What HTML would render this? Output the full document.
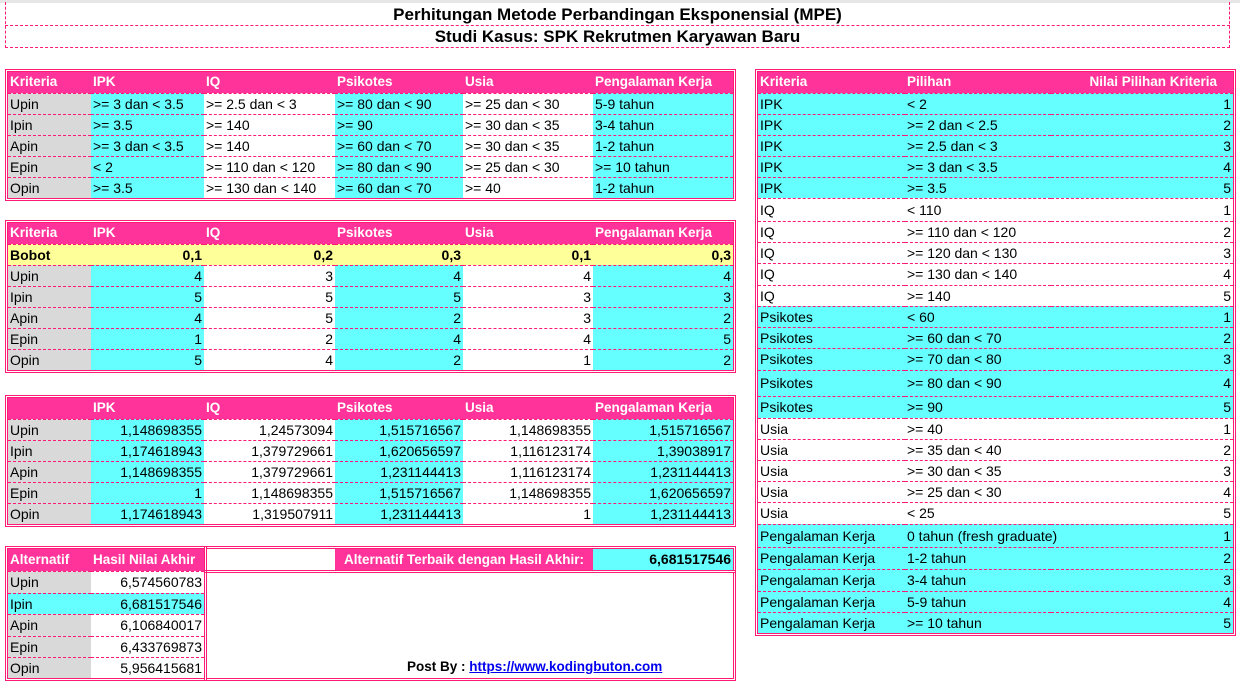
<!DOCTYPE html>
<html><head><meta charset="utf-8"><style>
*{margin:0;padding:0;box-sizing:border-box}
body{width:1240px;height:694px;background:#fff;position:relative;overflow:hidden;font-family:"Liberation Sans",sans-serif;font-size:14px;color:#000}
.box{position:absolute;border:3px double #ff1a75}
table{border-collapse:collapse;table-layout:fixed}
td{height:21px;padding:0 2px;white-space:nowrap;overflow:visible;border-bottom:1px dashed #ff1a75;line-height:20px}
tr.h td{background:#ff3399;color:#fff;font-weight:bold;font-size:13.5px}
tr:last-child td{border-bottom:none}
.g{background:#d9d9d9}.c{background:#66ffff}.w{background:#fff}.y{background:#ffff99;font-weight:bold}
.r{text-align:right}
.title{position:absolute;left:5px;width:1225px;text-align:center;font-weight:bold;font-size:17px;border-bottom:1px dashed #ff1a75}
</style></head><body>
<div style="position:absolute;left:0;top:0;width:1240px;height:3px;background:#e6e6e6"></div>
<div style="position:absolute;left:5px;top:2px;width:1px;height:46px;border-left:1px dashed #ff1a75"></div>
<div style="position:absolute;left:1229px;top:2px;width:1px;height:46px;border-left:1px dashed #ff1a75"></div>
<div class="title" style="top:3px;height:23px;line-height:23px">Perhitungan Metode Perbandingan Eksponensial (MPE)</div>
<div class="title" style="top:26px;height:22px;line-height:22px">Studi Kasus: SPK Rekrutmen Karyawan Baru</div>

<div class="box" style="left:5px;top:69px;width:731px">
<table style="width:725px"><colgroup><col style="width:83px"><col style="width:113px"><col style="width:131px"><col style="width:128px"><col style="width:130px"><col style="width:140px"></colgroup>
<tr class="h"><td>Kriteria</td><td>IPK</td><td>IQ</td><td>Psikotes</td><td>Usia</td><td>Pengalaman Kerja</td></tr>
<tr><td class="g">Upin</td><td class="c">&gt;= 3 dan &lt; 3.5</td><td class="w">&gt;= 2.5 dan &lt; 3</td><td class="c">&gt;= 80 dan &lt; 90</td><td class="w">&gt;= 25 dan &lt; 30</td><td class="c">5-9 tahun</td></tr>
<tr><td class="g">Ipin</td><td class="c">&gt;= 3.5</td><td class="w">&gt;= 140</td><td class="c">&gt;= 90</td><td class="w">&gt;= 30 dan &lt; 35</td><td class="c">3-4 tahun</td></tr>
<tr><td class="g">Apin</td><td class="c">&gt;= 3 dan &lt; 3.5</td><td class="w">&gt;= 140</td><td class="c">&gt;= 60 dan &lt; 70</td><td class="w">&gt;= 30 dan &lt; 35</td><td class="c">1-2 tahun</td></tr>
<tr><td class="g">Epin</td><td class="c">&lt; 2</td><td class="w">&gt;= 110 dan &lt; 120</td><td class="c">&gt;= 80 dan &lt; 90</td><td class="w">&gt;= 25 dan &lt; 30</td><td class="c">&gt;= 10 tahun</td></tr>
<tr><td class="g">Opin</td><td class="c">&gt;= 3.5</td><td class="w">&gt;= 130 dan &lt; 140</td><td class="c">&gt;= 60 dan &lt; 70</td><td class="w">&gt;= 40</td><td class="c">1-2 tahun</td></tr>
</table></div>

<div class="box" style="left:5px;top:220px;width:731px">
<table style="width:725px"><colgroup><col style="width:83px"><col style="width:113px"><col style="width:131px"><col style="width:128px"><col style="width:130px"><col style="width:140px"></colgroup>
<tr class="h"><td>Kriteria</td><td>IPK</td><td>IQ</td><td>Psikotes</td><td>Usia</td><td>Pengalaman Kerja</td></tr>
<tr class="y"><td>Bobot</td><td class="r">0,1</td><td class="r">0,2</td><td class="r">0,3</td><td class="r">0,1</td><td class="r">0,3</td></tr>
<tr><td class="g">Upin</td><td class="c r">4</td><td class="w r">3</td><td class="c r">4</td><td class="w r">4</td><td class="c r">4</td></tr>
<tr><td class="g">Ipin</td><td class="c r">5</td><td class="w r">5</td><td class="c r">5</td><td class="w r">3</td><td class="c r">3</td></tr>
<tr><td class="g">Apin</td><td class="c r">4</td><td class="w r">5</td><td class="c r">2</td><td class="w r">3</td><td class="c r">2</td></tr>
<tr><td class="g">Epin</td><td class="c r">1</td><td class="w r">2</td><td class="c r">4</td><td class="w r">4</td><td class="c r">5</td></tr>
<tr><td class="g">Opin</td><td class="c r">5</td><td class="w r">4</td><td class="c r">2</td><td class="w r">1</td><td class="c r">2</td></tr>
</table></div>

<div class="box" style="left:5px;top:395px;width:731px">
<table style="width:725px"><colgroup><col style="width:83px"><col style="width:113px"><col style="width:131px"><col style="width:128px"><col style="width:130px"><col style="width:140px"></colgroup>
<tr class="h"><td></td><td>IPK</td><td>IQ</td><td>Psikotes</td><td>Usia</td><td>Pengalaman Kerja</td></tr>
<tr><td class="g">Upin</td><td class="c r">1,148698355</td><td class="w r">1,24573094</td><td class="c r">1,515716567</td><td class="w r">1,148698355</td><td class="c r">1,515716567</td></tr>
<tr><td class="g">Ipin</td><td class="c r">1,174618943</td><td class="w r">1,379729661</td><td class="c r">1,620656597</td><td class="w r">1,116123174</td><td class="c r">1,39038917</td></tr>
<tr><td class="g">Apin</td><td class="c r">1,148698355</td><td class="w r">1,379729661</td><td class="c r">1,231144413</td><td class="w r">1,116123174</td><td class="c r">1,231144413</td></tr>
<tr><td class="g">Epin</td><td class="c r">1</td><td class="w r">1,148698355</td><td class="c r">1,515716567</td><td class="w r">1,148698355</td><td class="c r">1,620656597</td></tr>
<tr><td class="g">Opin</td><td class="c r">1,174618943</td><td class="w r">1,319507911</td><td class="c r">1,231144413</td><td class="w r">1</td><td class="c r">1,231144413</td></tr>
</table></div>

<div class="box" style="left:5px;top:546px;width:202px">
<table style="width:196px"><colgroup><col style="width:83px"><col style="width:113px"></colgroup>
<tr class="h"><td style="height:22px">Alternatif</td><td>Hasil Nilai Akhir</td></tr>
<tr><td class="g" style="height:22px">Upin</td><td class="w r">6,574560783</td></tr>
<tr><td class="c" style="height:21px">Ipin</td><td class="c r">6,681517546</td></tr>
<tr><td class="g" style="height:22px">Apin</td><td class="w r">6,106840017</td></tr>
<tr><td class="g" style="height:21px">Epin</td><td class="w r">6,433769873</td></tr>
<tr><td class="g" style="height:21px">Opin</td><td class="w r">5,956415681</td></tr>
</table></div>

<div class="box" style="left:204px;top:546px;width:532px;height:27px"></div>
<div style="position:absolute;left:335px;top:549px;width:258px;height:21px;background:#ff3399;color:#fff;font-weight:bold;font-size:13.5px;line-height:21px;text-align:center">Alternatif Terbaik dengan Hasil Akhir:</div>
<div style="position:absolute;left:593px;top:549px;width:140px;height:21px;background:#66ffff;font-weight:bold;line-height:21px;text-align:right;padding-right:2px">6,681517546</div>
<div class="box" style="left:204px;top:570px;width:532px;height:111px"></div>
<div style="position:absolute;left:407px;top:659px;font-weight:bold;font-size:13.5px">Post By : <span style="color:#0000ee;text-decoration:underline">https://www.kodingbuton.com</span></div>

<div class="box" style="left:755px;top:69px;width:481px">
<table style="width:475px"><colgroup><col style="width:147px"><col style="width:146px"><col style="width:182px"></colgroup>
<tr class="h"><td style="height:21px">Kriteria</td><td>Pilihan</td><td class="r" style="padding-right:16px">Nilai Pilihan Kriteria</td></tr>
<tr class="c"><td>IPK</td><td>&lt; 2</td><td class="r">1</td></tr>
<tr class="c"><td>IPK</td><td>&gt;= 2 dan &lt; 2.5</td><td class="r">2</td></tr>
<tr class="c"><td>IPK</td><td>&gt;= 2.5 dan &lt; 3</td><td class="r">3</td></tr>
<tr class="c"><td>IPK</td><td>&gt;= 3 dan &lt; 3.5</td><td class="r">4</td></tr>
<tr class="c"><td>IPK</td><td>&gt;= 3.5</td><td class="r">5</td></tr>
<tr><td style="height:23px">IQ</td><td>&lt; 110</td><td class="r">1</td></tr>
<tr><td>IQ</td><td>&gt;= 110 dan &lt; 120</td><td class="r">2</td></tr>
<tr><td>IQ</td><td>&gt;= 120 dan &lt; 130</td><td class="r">3</td></tr>
<tr><td style="height:22px">IQ</td><td>&gt;= 130 dan &lt; 140</td><td class="r">4</td></tr>
<tr><td>IQ</td><td>&gt;= 140</td><td class="r">5</td></tr>
<tr class="c"><td>Psikotes</td><td>&lt; 60</td><td class="r">1</td></tr>
<tr class="c"><td>Psikotes</td><td>&gt;= 60 dan &lt; 70</td><td class="r">2</td></tr>
<tr class="c"><td style="height:22px">Psikotes</td><td>&gt;= 70 dan &lt; 80</td><td class="r">3</td></tr>
<tr class="c"><td style="height:26px">Psikotes</td><td>&gt;= 80 dan &lt; 90</td><td class="r">4</td></tr>
<tr class="c"><td style="height:22px">Psikotes</td><td>&gt;= 90</td><td class="r">5</td></tr>
<tr><td>Usia</td><td>&gt;= 40</td><td class="r">1</td></tr>
<tr><td>Usia</td><td>&gt;= 35 dan &lt; 40</td><td class="r">2</td></tr>
<tr><td>Usia</td><td>&gt;= 30 dan &lt; 35</td><td class="r">3</td></tr>
<tr><td>Usia</td><td>&gt;= 25 dan &lt; 30</td><td class="r">4</td></tr>
<tr><td style="height:22px">Usia</td><td>&lt; 25</td><td class="r">5</td></tr>
<tr class="c"><td style="height:23px">Pengalaman Kerja</td><td>0 tahun (fresh graduate)</td><td class="r">1</td></tr>
<tr class="c"><td style="height:22px">Pengalaman Kerja</td><td>1-2 tahun</td><td class="r">2</td></tr>
<tr class="c"><td style="height:22px">Pengalaman Kerja</td><td>3-4 tahun</td><td class="r">3</td></tr>
<tr class="c"><td style="height:21px">Pengalaman Kerja</td><td>5-9 tahun</td><td class="r">4</td></tr>
<tr class="c"><td style="height:21px">Pengalaman Kerja</td><td>&gt;= 10 tahun</td><td class="r">5</td></tr>
</table></div>
</body></html>
